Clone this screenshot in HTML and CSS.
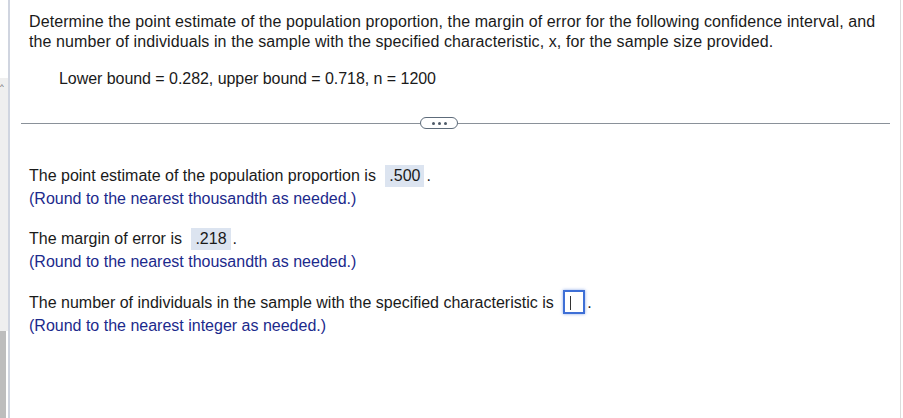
FILE: index.html
```html
<!DOCTYPE html>
<html>
<head>
<meta charset="utf-8">
<link rel="stylesheet" href="styles.css">
</head>
<body>
<div class="page">
  <div class="side">
    <div class="side-top"></div>
    <div class="side-mid"><span class="caret">^</span></div>
    <div class="side-thumb"></div>
  </div>
  <div class="divider"></div>
  <main class="content">
    <p class="question">Determine the point estimate of the population proportion, the margin of error for the following confidence interval, and the number of individuals in the sample with the specified characteristic, x, for the sample size provided.</p>
    <p class="given">Lower bound = 0.282, upper bound = 0.718, n = 1200</p>
    <div class="rule">
      <span class="line left"></span>
      <span class="more"><i></i><i></i><i></i></span>
      <span class="line"></span>
    </div>
    <div class="answers">
      <div class="item">
        <p class="stmt">The point estimate of the population proportion is <span class="ans">.500</span>.</p>
        <p class="hint">(Round to the nearest thousandth as needed.)</p>
      </div>
      <div class="item">
        <p class="stmt">The margin of error is <span class="ans">.218</span>.</p>
        <p class="hint">(Round to the nearest thousandth as needed.)</p>
      </div>
      <div class="item">
        <p class="stmt">The number of individuals in the sample with the specified characteristic is <span class="input"><span class="cursor"></span></span>.</p>
        <p class="hint">(Round to the nearest integer as needed.)</p>
      </div>
    </div>
  </main>
  <div class="right-edge"></div>
</div>
</body>
</html>
```
FILE: styles.css
```css
* { box-sizing: border-box; }
html, body { margin: 0; padding: 0; background: #fff; }
body { font-family: "Liberation Sans", Arial, sans-serif; font-size: 16px; color: #1a1a1a; }
.page { display: flex; height: 418px; overflow: hidden; }
.side { width: 8px; display: flex; flex-direction: column; }
.side-top { height: 78px; background: #fff; }
.side-mid { height: 253px; background: #efefef; position: relative; }
.caret { position: absolute; left: 0; top: 5px; font-size: 8px; color: #555; line-height: 1; }
.side-thumb { flex: 1; background: #bdbdbd; width: 6px; }
.divider { width: 2px; background: #d0d5e0; }
.content { flex: 1; padding: 0 0 0 19px; }
.right-edge { width: 3px; border-left: 1px solid #dcdcdc; }
p { margin: 0; }
.question { margin-top: 12px; line-height: 20px; width: 870px; letter-spacing: 0.1px; }
.given { margin-top: 17px; padding-left: 30px; line-height: 20px; letter-spacing: -0.05px; }
.rule { display: flex; align-items: center; margin-top: 28px; margin-left: -8px; width: 869px; }
.line { flex: 1; height: 1px; background: #8a9199; }
.line.left { flex: 0 0 399px; }
.more { width: 38px; height: 12px; border: 1.5px solid #5d6b7a; border-radius: 6px; display: flex; align-items: center; justify-content: center; gap: 3px; background: #fff; }
.more i { width: 3px; height: 3px; background: #4e5a68; border-radius: 50%; display: block; }
.answers { margin-top: 35px; display: flex; flex-direction: column; gap: 17px; }
.stmt { line-height: 24px; }
.hint { line-height: 22px; color: #1c2a8c; }
.ans { display: inline-block; background: #dce4f0; padding: 0 4px; margin: 0 2px 0 5px; line-height: 22px; color: #1a1a1a; }
.input { display: inline-block; vertical-align: -6px; width: 22px; height: 24px; border: 2px solid #3e6fd6; box-shadow: 0 0 3px rgba(62,111,214,0.6); margin: 0 2px 0 5px; position: relative; background: #fff; }
.cursor { position: absolute; left: 5px; top: 4px; width: 1px; height: 14px; background: #333; }
```
